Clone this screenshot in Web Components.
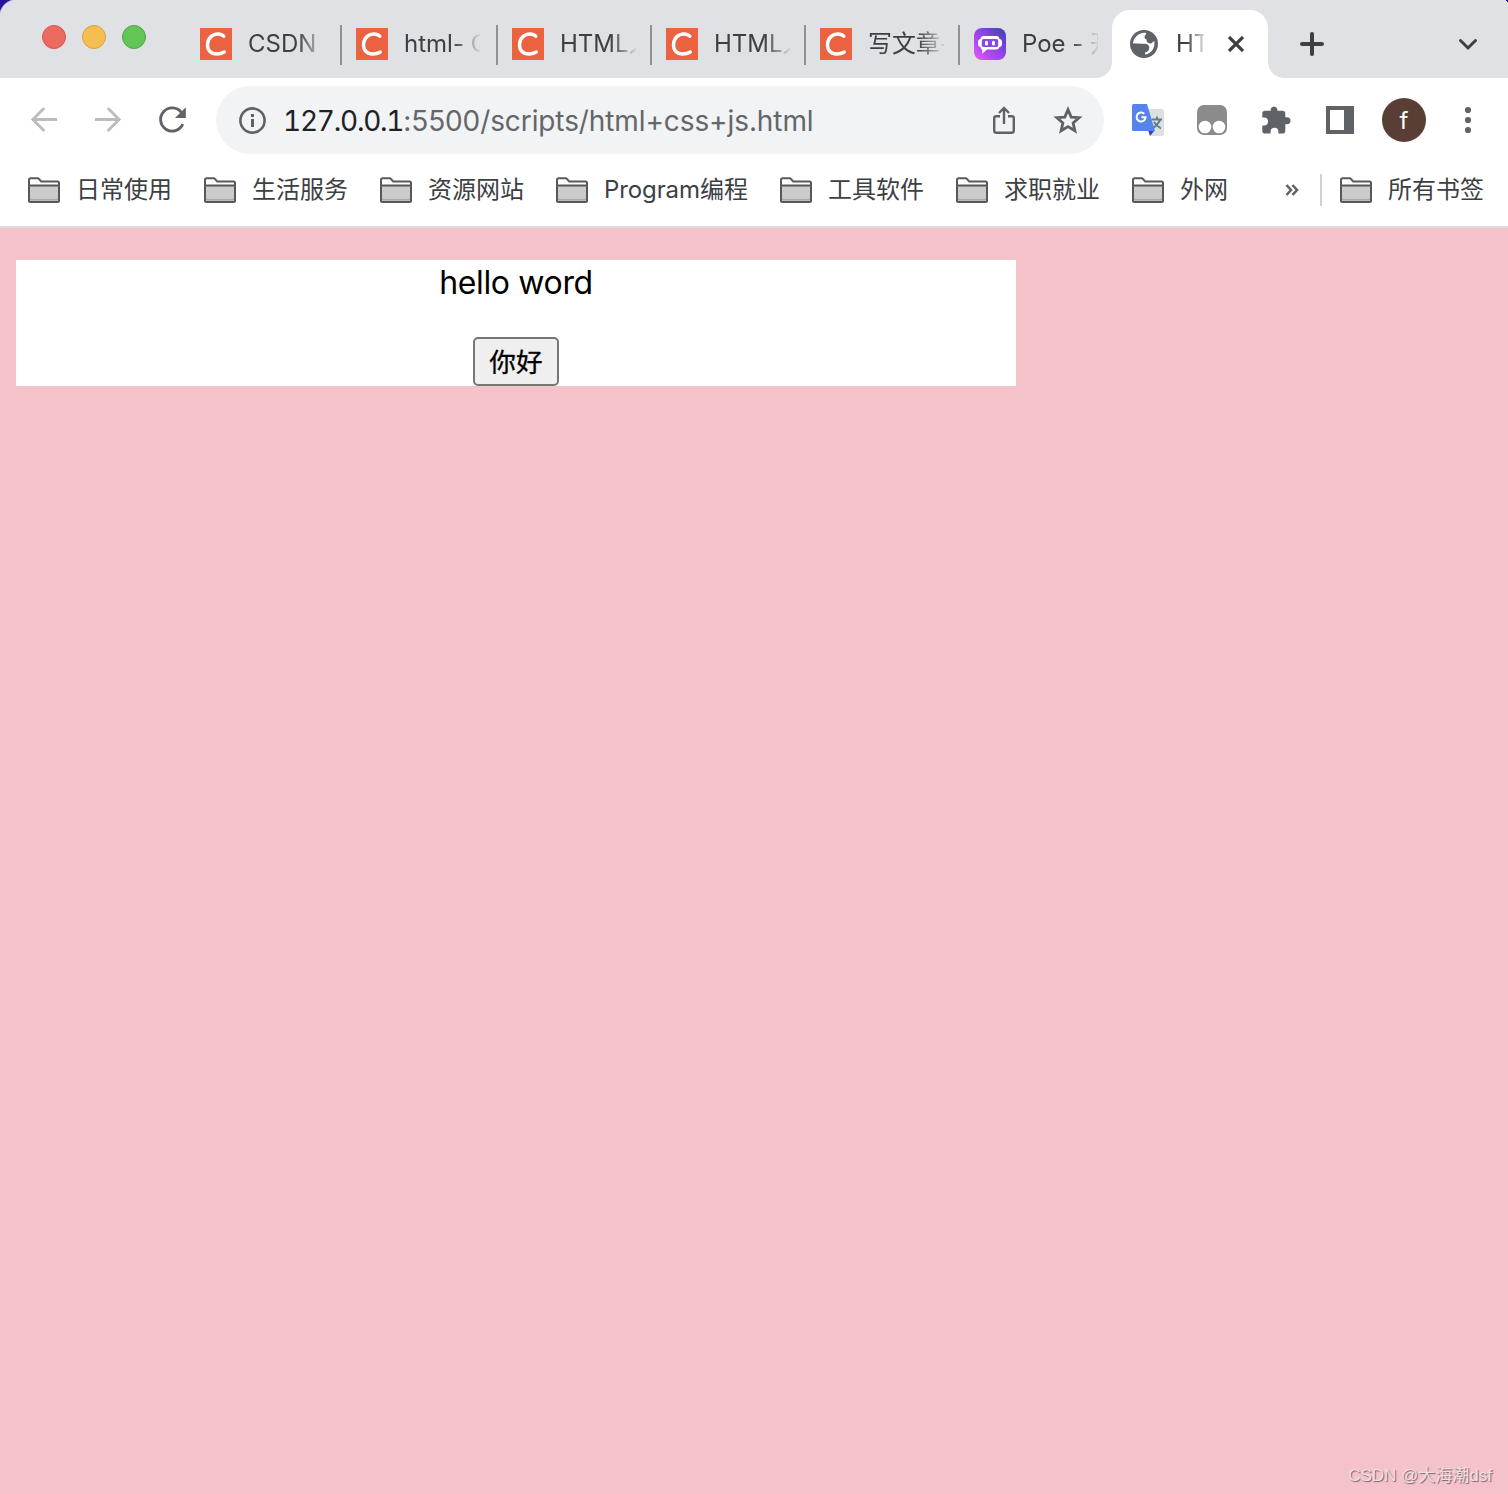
<!DOCTYPE html>
<html lang="zh-CN">
<head>
<meta charset="utf-8">
<title>HTML</title>
<style>
html,body{margin:0;height:100%;overflow:hidden;background:#f5c2cb}
body{font-family:Inter,"Noto Sans CJK SC",sans-serif;color:#3c4043}
</style>
</head>
<body>
<browser-window></browser-window>
<script>
const define = (name, markup) => customElements.define(name, class extends HTMLElement {
  connectedCallback() {
    if (this.shadowRoot) return;
    const root = this.attachShadow({mode: 'open'});
    root.innerHTML = markup;
  }
});

define('window-controls', `<style>
:host{display:flex;gap:16px;padding:25px 0 0 42px;width:144px}
i{width:24px;height:24px;border-radius:50%;box-sizing:border-box;border:1px solid #d8554b;background:#ec6a5f}
i:nth-of-type(2){background:#f4bf50;border-color:#d8a13e}
i:nth-of-type(3){background:#61c655;border-color:#4fa73f}
</style><i></i><i></i><i></i>`);

define('csdn-icon', `<style>:host,svg{display:block;width:32px;height:32px}</style>
<svg viewBox="0 0 32 32"><rect width="32" height="32" fill="#eb6240"/><path d="M23.800 8.300C22.600 6.800 20.600 6 18 6C12 6 7.700 10.400 7.500 16.800C7.400 22.500 11 26 16.600 26C19.800 26 22.400 25.200 24.300 24" fill="none" stroke="#fff" stroke-width="3.400" stroke-linecap="round"/></svg>`);

define('poe-icon', `<style>:host,svg{display:block;width:32px;height:32px}</style>
<svg viewBox="0 0 32 32"><defs><linearGradient id="g" x1="0" y1="1" x2="1" y2="0"><stop offset="0" stop-color="#e45df2"/><stop offset=".28" stop-color="#b94af5"/><stop offset=".6" stop-color="#8443e0"/><stop offset="1" stop-color="#3944a5"/></linearGradient></defs>
<rect width="32" height="32" rx="8" fill="url(#g)"/>
<path d="M9.500 8h13q2.500 0 3 3q2.500 .4 2.500 2.500v3q0 2.200-2.500 2.500q-.6 2.600-3 2.600H13L8.200 25.800v-4.300Q6.900 21 6.500 19q-2.500-.3-2.500-2.500v-3q0-2.100 2.500-2.500q.5-3 3-3z" fill="#fff"/>
<rect x="7.800" y="11" width="16.400" height="8" rx="1.800" fill="#8948e5"/><path d="M12.500 14.200v1.800M19.500 14.200v1.800" stroke="#fff" stroke-width="3" stroke-linecap="round"/></svg>`);

define('globe-icon', `<style>:host,svg{display:block;width:32px;height:32px}</style>
<svg viewBox="0 0 32 32"><circle cx="16" cy="16" r="14" fill="#5f6368"/><path d="M5 15.800C5.200 10 10 5 16.500 4.800C17.600 4.900 18 5 18.300 5.200C18 6.700 16.700 6.800 16.500 9C16.600 10.600 17.200 11.300 18.600 11.600C18.300 14.100 19.700 15.400 22 15.500C24.100 15.700 24.500 14.200 26.200 13.100C27.600 18.800 24 25.300 17.300 26.800L17 24.300C19.300 24.200 21.400 22.200 21.300 19.500C21.100 17.200 19.400 15.900 17 15.800Z" fill="#fff"/><path d="M5 15.400L11 15.800C14.300 16 16.400 17.200 16.600 19.600C16.700 21 17.600 21.900 16.300 22C14.500 22 15.400 24 15.700 26.600C8.800 26 5 21.200 5 15.400Z" fill="#5f6368"/></svg>`);

define('browser-tab', `<style>
:host{display:flex;box-sizing:border-box;height:68px;width:154px;margin-top:10px;padding-left:14px;align-items:center;position:relative}
:host([wide]){width:156px}
:host([last]){width:152px}
.t{width:76px;margin-left:16px;overflow:hidden;white-space:nowrap;font-size:24px;font-weight:430;line-height:34px;-webkit-mask-image:linear-gradient(90deg,#000 50px,transparent 78px)}
:host::after{content:"";width:2px;height:40px;background:#8f9194;margin:2px 0 0 auto}
:host([last])::after,:host([active])::after{display:none}
:host([active]){width:156px;padding-left:16px;background:#fff;border-radius:18px 18px 0 0}
:host([active]) .t{width:28px;-webkit-mask-image:linear-gradient(90deg,#000 10px,transparent 32px)}
.feet{display:none}
:host([active]) .feet{display:block}
.feet i{position:absolute;bottom:0;width:16px;height:16px;left:-16px;background:radial-gradient(circle at 0 0,transparent 15.500px,#fff 16.200px)}
.feet i+i{left:156px;background:radial-gradient(circle at 100% 0,transparent 15.500px,#fff 16.200px)}
</style><slot name="icon"></slot><span class="t"><slot></slot></span><slot name="close"></slot><span class="feet"><i></i><i></i></span>`);

define('tab-strip', `<style>
:host{display:flex;height:78px;background:#dfe1e5;position:relative}
:host::before{content:"";position:absolute;left:0;top:0;width:12px;height:14px;background:radial-gradient(circle at 17px 17px,transparent 17px,#24159a 18.500px)}
:host::after{content:"";position:absolute;right:0;top:0;width:3px;height:3px;background:linear-gradient(45deg,transparent 50%,#24159a 55%)}
.x{margin-left:24px}.plus{margin:32px 0 0 32px}.down{margin:38px 31px 0 auto}
svg{display:block;flex:none;fill:none;stroke:#3c4043}
</style><window-controls></window-controls>
<browser-tab wide><csdn-icon slot="icon"></csdn-icon>CSDN -</browser-tab>
<browser-tab wide><csdn-icon slot="icon"></csdn-icon>html- C</browser-tab>
<browser-tab><csdn-icon slot="icon"></csdn-icon>HTML入</browser-tab>
<browser-tab><csdn-icon slot="icon"></csdn-icon>HTML入</browser-tab>
<browser-tab><csdn-icon slot="icon"></csdn-icon>写文章-</browser-tab>
<browser-tab last><poe-icon slot="icon"></poe-icon>Poe - 开</browser-tab>
<browser-tab active><globe-icon slot="icon"></globe-icon>HTM<svg class="x" slot="close" width="16" height="16" stroke-width="3.200"><path d="M1 1L15 15M15 1L1 15"/></svg></browser-tab>
<svg class="plus" width="24" height="24" stroke-width="4" stroke-linecap="round"><path d="M12 2v20M2 12h20"/></svg>
<svg class="down" width="18" height="13" stroke-width="3" stroke-linecap="round"><path d="M1.500 2.500L9 10L16.500 2.500"/></svg>`);

define('address-bar', `<style>
:host{display:flex;box-sizing:border-box;width:888px;height:68px;border-radius:34px;background:#f1f3f4;align-items:center;padding:0 20px 0 20px}
svg{display:block;flex:none}
.url{margin:1px 0 0 15px;font-size:28px;font-weight:430;line-height:40px;color:#646669;white-space:nowrap;flex:1;letter-spacing:-.1px}
b{font-weight:430;color:#202124;font-variant-numeric:tabular-nums;letter-spacing:-1.250px}
.star{margin-left:32px}
</style>
<svg width="32" height="32" viewBox="0 0 32 32"><circle cx="16.500" cy="16.500" r="12.100" fill="none" stroke="#5f6368" stroke-width="2.600"/><path d="M15 10h3v3h-3zM15 15h3v8h-3z" fill="#5f6368"/></svg>
<span class="url"><b>127.0.0.1</b>:5500/scripts/html+css+js.html</span>
<svg width="32" height="32" viewBox="0 0 32 32" fill="none" stroke="#5f6368" stroke-width="2.400"><path d="M12 12.200H8.300Q6.200 12.200 6.200 14.300V26.500Q6.200 28.700 8.300 28.700H23.700Q25.800 28.700 25.800 26.500V14.300Q25.800 12.200 23.700 12.200H20M16 20V5M11 9L16 4L21 9"/></svg>
<svg class="star" width="32" height="32" viewBox="0 0 32 32" fill="none" stroke="#5f6368" stroke-width="2.800"><path d="M16 5.600L19.200 13.100L27.100 13.700L21.100 18.900L22.900 26.800L16 22.600L9.100 26.800L10.900 18.900L4.900 13.700L12.800 13.100Z"/></svg>`);

define('tool-bar', `<style>
:host{display:flex;height:84px;background:#fff;align-items:center;box-sizing:border-box;padding:0 24px 0 28px}
svg{display:block;flex:none}.nav{display:flex;gap:32px;width:188px}
.ext{display:flex;gap:32px;align-items:center;margin-left:28px}
.av{width:44px;height:44px;border-radius:50%;background:#593e35;color:#fff;font:24px/46px Inter,sans-serif;text-align:center;margin:0 -6px}
</style>
<div class="nav">
<svg width="32" height="32" fill="none" stroke="#babcbe" stroke-width="2.800"><path d="M29 15.500H4.500M16.300 4L4.800 15.500L16.300 27"/></svg>
<svg width="32" height="32" fill="none" stroke="#babcbe" stroke-width="2.800"><path d="M3 15.500H27.500M15.700 4L27.200 15.500L15.700 27"/></svg>
<svg width="32" height="32"><path d="M25.300 8.300A11.600 11.600 0 1 0 26.800 20.200" fill="none" stroke="#5f6368" stroke-width="2.900"/><path d="M29.800 3.200V14H19z" fill="#5f6368"/></svg>
</div>
<address-bar></address-bar>
<div class="ext">
<svg width="32" height="32"><path d="M13 5H30q2 0 2 2V30q0 2-2 2H19z" fill="#dedfe0"/><path d="M19.500 15.500H30M25 12.500v3M28 16Q25.500 21.500 20 24.500M22 18Q24.500 22 29 24.500" fill="none" stroke="#607d8b" stroke-width="1.900"/><path d="M16 26h7l-5 6z" fill="#3047b0"/><path d="M1.500 0H15L23 27H1.500Q0 27 0 25.500V1.500Q0 0 1.500 0z" fill="#5584ec"/><path d="M12.300 9.800A4.500 4.500 0 1 0 13.600 13.300H9.500" fill="none" stroke="#fff" stroke-width="2"/></svg>
<svg width="32" height="32"><rect x="1" y="1" width="30" height="30" rx="7" fill="#8b8b8b"/><circle cx="9" cy="23" r="6.300" fill="#fff"/><circle cx="23" cy="23" r="6.300" fill="#fff"/></svg>
<svg width="32" height="32"><path d="M8.700 6.800H10.700V5A3.400 3.400 0 0 1 17.300 5V6.800H22.500Q25.300 6.800 25.300 9.500V13.200H27A3.400 3.400 0 0 1 27 20.200H25.300V26.800Q25.300 29.600 22.500 29.600H18.400V27.600A3.900 3.900 0 0 0 10.600 27.600V29.600H5Q2.300 29.600 2.300 26.800V21.600H4A4 4 0 0 0 4 13.600H2.300V9.500Q2.300 6.800 5 6.800Z" fill="#5f6368"/></svg>
<svg width="32" height="32"><path d="M2 2H30V30H2ZM6 6V26H20V6Z" fill="#5f6368" fill-rule="evenodd"/></svg>
<div class="av">f</div>
<svg width="32" height="32" fill="#5f6368"><circle cx="16" cy="6" r="3.100"/><circle cx="16" cy="16" r="3.100"/><circle cx="16" cy="26" r="3.100"/></svg>
</div>`);

define('bookmark-folder', `<style>
:host{display:flex;gap:16px;align-items:center;white-space:nowrap;font-size:24px;line-height:36px}
svg{display:block;flex:none}
</style><svg width="32" height="26"><path d="M1 3Q1 1.200 2.800 1.200H10.200L13.200 4.500H29.500Q31 4.500 31 6V23.500Q31 25 29.500 25H2.500Q1 25 1 23.500Z" fill="#fff"/><path d="M1 8.500H31V25H1Z" fill="#cbcbcb"/><path d="M2 22.700H30" stroke="#aaa" stroke-width="1.600"/><path d="M1 3Q1 1.200 2.800 1.200H10.200L13.200 4.500H29.500Q31 4.500 31 6V23.500Q31 25 29.500 25H2.500Q1 25 1 23.500ZM1 8.500H31" fill="none" stroke="#585858" stroke-width="2"/></svg><span><slot></slot></span>`);

define('bookmarks-bar', `<style>
:host{display:flex;gap:32px;height:66px;box-sizing:border-box;background:#fff;border-bottom:2px solid #dcdddd;padding:0 24px 8px 28px;align-items:center}
.end{display:flex;align-items:center;margin-left:auto}
hr{width:2px;height:32px;border:0;background:#d0d0d3;margin:0 18px 0 21px}
svg{display:block}
</style>
<bookmark-folder>日常使用</bookmark-folder><bookmark-folder>生活服务</bookmark-folder><bookmark-folder>资源网站</bookmark-folder><bookmark-folder><span style="letter-spacing:-.1px;font-weight:430">Program</span>编程</bookmark-folder><bookmark-folder>工具软件</bookmark-folder><bookmark-folder>求职就业</bookmark-folder><bookmark-folder>外网</bookmark-folder>
<div class="end"><svg width="14" height="12" fill="none" stroke="#5f6368" stroke-width="2.600"><path d="M1.500 1L6 6L1.500 11M7.500 1L12 6L7.500 11"/></svg><hr><bookmark-folder>所有书签</bookmark-folder></div>`);

define('page-view', `<style>
:host{display:flex;flex-direction:column;flex:1;box-sizing:border-box;background:#f5c2cb;padding:32px 16px 0}
.box{width:1000px;height:126px;background:#fff;color:#000;text-align:center;display:flex;flex-direction:column;align-items:center}
p{margin:1px 0 0;font-size:32px;line-height:44px;letter-spacing:-.35px}
button{margin-top:32px;box-sizing:border-box;width:86px;height:49px;border:2px solid #767676;border-radius:5px;background:#efefef;color:#000;padding:0 0 2px;font:400 26.667px/40px "Noto Sans CJK SC",sans-serif;-webkit-text-stroke:.3px #000}
footer{margin:auto 0 6px auto;font:17px/24px "Liberation Sans","Noto Sans CJK SC",sans-serif;color:#f0e0e3;text-shadow:1px 1px 1px #776066;white-space:nowrap}
</style><div class="box"><p>hello word</p><button>你好</button></div><footer>CSDN @大海潮dsf</footer>`);

define('browser-window', `<style>:host{display:flex;flex-direction:column;width:1508px;height:1494px}</style>
<tab-strip></tab-strip><tool-bar></tool-bar><bookmarks-bar></bookmarks-bar><page-view></page-view>`);
</script>
</body>
</html>
